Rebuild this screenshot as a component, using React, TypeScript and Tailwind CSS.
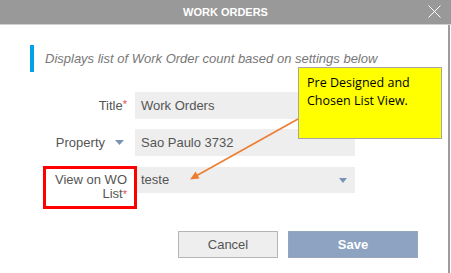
import React from "react";

export default function App() {
  return (
    <div className="relative w-[451px] h-[273px] bg-white overflow-hidden font-['Liberation_Sans',Arial,sans-serif] text-[13px] text-[#555]">
      <div className="relative flex h-[25px] items-center justify-center bg-[#999999] border-b border-[#d0d0d0]">
        <span className="text-[11px] font-bold text-white">WORK ORDERS</span>
        <svg className="absolute right-[10px] top-[5px]" width="13" height="13" viewBox="0 0 13 13">
          <path d="M0.5 0.5 L12.5 12.5 M12.5 0.5 L0.5 12.5" stroke="#ffffff" strokeWidth="1" fill="none" />
        </svg>
      </div>
      <div className="flex h-[248px]">
        <div className="w-[448px]">
          <div className="mt-[20px] ml-[30px] flex h-[27px]">
            <div className="w-[4px] bg-[#00a2e8]" />
            <div className="flex items-center pl-[11px] italic text-[#777]">
              Displays list of Work Order count based on settings below
            </div>
          </div>
          <div className="mt-[20px] flex flex-col">
            <div className="flex h-[27px] items-center">
              <div className="w-[135px] pr-[8px] text-right">
                Title<span className="text-[#e84a4a] text-[11px] align-top">*</span>
              </div>
              <div className="flex h-[27px] w-[220px] items-center bg-[#eeeeee] pl-[6px]">Work Orders</div>
            </div>
            <div className="mt-[10px] flex h-[27px] items-center">
              <div className="flex w-[135px] items-center justify-end pr-[11px]">
                <span>Property</span>
                <svg className="ml-[10px]" width="9" height="5" viewBox="0 0 9 5">
                  <path d="M0 0 L9 0 L4.5 5 Z" fill="#7b92b6" />
                </svg>
              </div>
              <div className="flex h-[27px] w-[220px] items-center bg-[#eeeeee] pl-[6px]">Sao Paulo 3732</div>
            </div>
            <div className="mt-[11px] flex items-start">
              <div className="w-[135px] pr-[8px] pt-[6px] text-right leading-[14px]">
                View on WO
                <br />
                List<span className="text-[#e84a4a] text-[11px] align-top">*</span>
              </div>
              <div className="flex h-[26px] w-[220px] items-center justify-between bg-[#eeeeee] pl-[6px] pr-[8px]">
                <span>teste</span>
                <svg width="8" height="5" viewBox="0 0 8 5">
                  <path d="M0 0 L8 0 L4 5 Z" fill="#7b92b6" />
                </svg>
              </div>
            </div>
          </div>
          <div className="mt-[30px] flex">
            <button className="ml-[178px] h-[27px] w-[100px] border border-[#b5b5b5] bg-[#eeeeee] text-[#555]">Cancel</button>
            <button className="ml-[10px] h-[27px] w-[130px] border border-dotted border-[#9aa9bd] bg-[#8da3c1] font-bold text-white">Save</button>
          </div>
        </div>
        <div className="w-[2px] bg-[#9c9c9c]" />
      </div>

      <div className="pointer-events-none absolute left-[43px] top-[166px] h-[43px] w-[94px] border-[3px] border-[#ff0000]" />

      <div className="absolute left-[298px] top-[67px] h-[72px] w-[144px] border border-[#a6a6a6] bg-[#ffff00] pl-[8px] pt-[6px] font-['Open_Sans',sans-serif] text-[12.5px] leading-[18px] text-black">
        Pre Designed and
        <br />
        Chosen List View.
      </div>

      <svg className="pointer-events-none absolute left-0 top-0" width="451" height="273" viewBox="0 0 451 273">
        <line x1="298" y1="119" x2="196" y2="176" stroke="#ed7d31" strokeWidth="1.6" />
        <path d="M190 179.5 L199.5 178.5 L195.5 171.5 Z" fill="#ed7d31" />
      </svg>
    </div>
  );
}
